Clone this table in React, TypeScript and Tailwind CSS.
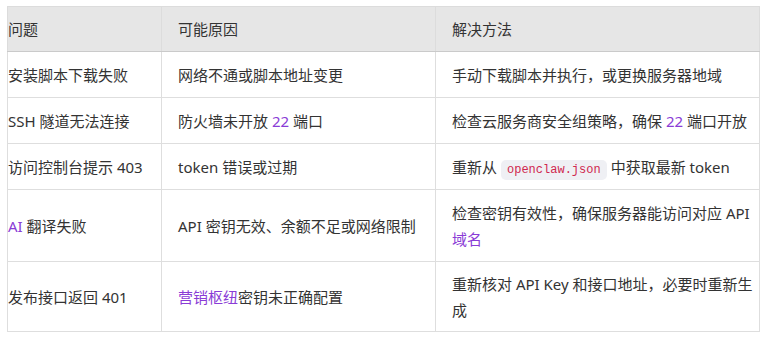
import React from "react";

const P = ({ children }: { children: React.ReactNode }) => (
  <span className="text-[#8a3cd6]">{children}</span>
);

const Code = ({ children }: { children: React.ReactNode }) => (
  <code
    className="mx-[4px] rounded-[5px] bg-[#eff0f4] px-[6px] py-[3px] text-[12px] leading-none text-[#d0284f]"
    style={{ fontFamily: '"Liberation Mono", "DejaVu Sans Mono", monospace' }}
  >
    {children}
  </code>
);

const rows: [React.ReactNode, React.ReactNode, React.ReactNode][] = [
  ["安装脚本下载失败", "网络不通或脚本地址变更", "手动下载脚本并执行，或更换服务器地域"],
  [
    "SSH 隧道无法连接",
    <>防火墙未开放 <P>22</P> 端口</>,
    <>检查云服务商安全组策略，确保 <P>22</P> 端口开放</>,
  ],
  [
    "访问控制台提示 403",
    "token 错误或过期",
    <>重新从<Code>openclaw.json</Code>中获取最新 token</>,
  ],
  [
    <><P>AI</P> 翻译失败</>,
    "API 密钥无效、余额不足或网络限制",
    <>检查密钥有效性，确保服务器能访问对应 API <P>域名</P></>,
  ],
  [
    "发布接口返回 401",
    <><P>营销枢纽</P>密钥未正确配置</>,
    "重新核对 API Key 和接口地址，必要时重新生成",
  ],
];

const heights = ["h-[46px]", "h-[46px]", "h-[46px]", "h-[72px]", "h-[70px]"];

export default function App() {
  return (
    <div
      className="h-[342px] w-[768px] bg-white pl-[7px] pt-[6px] text-[15px] text-[#333]"
      style={{ fontFamily: '"Noto Sans", "Noto Sans CJK SC", sans-serif' }}
    >
      <table className="w-[752px] table-fixed border-collapse">
        <colgroup>
          <col className="w-[154px]" />
          <col className="w-[274px]" />
          <col className="w-[324px]" />
        </colgroup>
        <thead>
          <tr className="h-[45px] bg-[#e6e6e6]">
            <th className="border border-[#dcdcdc] border-b-[#cacaca] p-0 text-left font-normal leading-[24px]">
              问题
            </th>
            <th className="border border-[#dcdcdc] border-b-[#cacaca] py-0 pl-4 text-left font-normal leading-[24px]">
              可能原因
            </th>
            <th className="border border-[#dcdcdc] border-b-[#cacaca] py-0 pl-4 text-left font-normal leading-[24px]">
              解决方法
            </th>
          </tr>
        </thead>
        <tbody>
          {rows.map((r, i) => (
            <tr key={i} className={heights[i]}>
              <td className="border border-[#dedede] p-0 leading-[26px]">{r[0]}</td>
              <td className="border border-[#dedede] py-0 pl-4 leading-[26px]">{r[1]}</td>
              <td className="border border-[#dedede] py-0 pl-4 pr-0 leading-[26px]">{r[2]}</td>
            </tr>
          ))}
        </tbody>
      </table>
    </div>
  );
}
